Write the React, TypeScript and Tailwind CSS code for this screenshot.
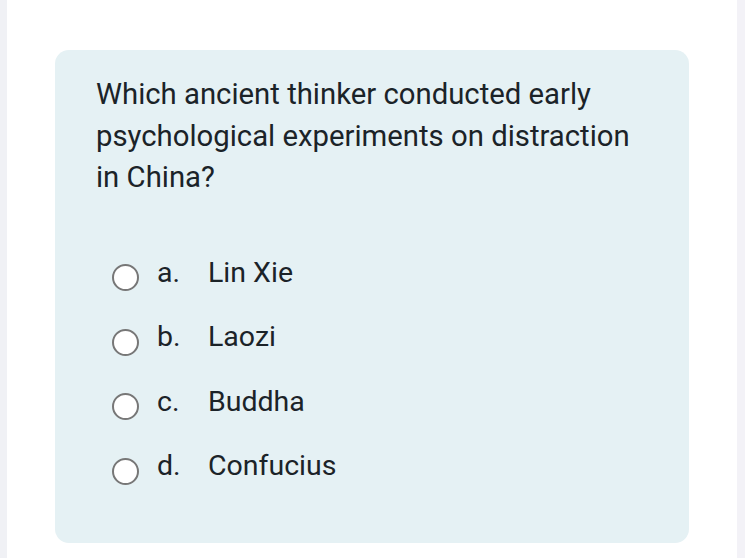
import React from "react";

const options = [
  { l: "a.", t: "Lin Xie" },
  { l: "b.", t: "Laozi" },
  { l: "c.", t: "Buddha" },
  { l: "d.", t: "Confucius" },
];

export default function App() {
  return (
    <div
      className="flex h-[558px] w-[745px] bg-white"
      style={{ fontFamily: "Roboto, 'Liberation Sans', sans-serif" }}
    >
      <div className="h-full w-[7px] bg-[#f0f1f5]" />
      <div className="flex-1 px-12 pt-[50px] pb-[15px]">
        <div className="h-full rounded-[14px] bg-[#e5f1f4] pl-[41px] pr-[50px] pt-[24px] text-[#1b2328]">
          <p className="text-[29.3px] leading-[41.5px]">
            Which ancient thinker conducted early psychological experiments on distraction in China?
          </p>
          <div className="mt-[57px] flex flex-col gap-[30.5px] pl-4">
            {options.map((o) => (
              <div key={o.l} className="flex h-[34px] items-center">
                <div className="h-[27px] w-[27px] translate-y-[5px] rounded-full border-[2.5px] border-[#777] bg-white" />
                <span className="ml-[18px] w-[51px] text-[28.5px] leading-[34px]">{o.l}</span>
                <span className="text-[28.5px] leading-[34px]">{o.t}</span>
              </div>
            ))}
          </div>
        </div>
      </div>
      <div className="h-full w-[8px] bg-[#f3f2f7]" />
    </div>
  );
}
